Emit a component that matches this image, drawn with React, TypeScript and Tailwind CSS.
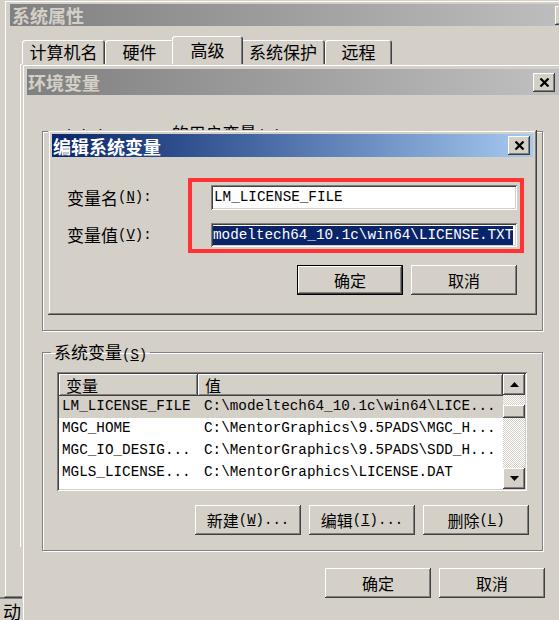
import React from "react";

const face = "bg-[#d4d0c8]";
const cjk = "font-['Noto_Sans_CJK_SC',sans-serif]";
const mono = "font-['Liberation_Mono','Noto_Sans_CJK_SC',monospace]";
const raised =
  "shadow-[inset_-1px_-1px_#404040,inset_1px_1px_#ffffff,inset_-2px_-2px_#808080,inset_2px_2px_#d4d0c8]";
const frame =
  "shadow-[inset_-1px_-1px_#404040,inset_1px_1px_#d4d0c8,inset_-2px_-2px_#808080,inset_2px_2px_#ffffff]";
const sunken =
  "shadow-[inset_1px_1px_#808080,inset_-1px_-1px_#ffffff,inset_2px_2px_#404040,inset_-2px_-2px_#d4d0c8]";
const etched =
  "border border-[#808080] shadow-[1px_1px_#ffffff,inset_1px_1px_#ffffff]";

const rows: [string, string][] = [
  ["LM_LICENSE_FILE", "C:\\modeltech64_10.1c\\win64\\LICE..."],
  ["MGC_HOME", "C:\\MentorGraphics\\9.5PADS\\MGC_H..."],
  ["MGC_IO_DESIG...", "C:\\MentorGraphics\\9.5PADS\\SDD_H..."],
  ["MGLS_LICENSE...", "C:\\MentorGraphics\\LICENSE.DAT"],
];

function Mono({ children }: { children: React.ReactNode }) {
  return <span className={`${mono} text-[14px]`}>{children}</span>;
}

function CloseBox() {
  return (
    <div className={`flex h-[19px] w-[22px] shrink-0 items-center justify-center ${face} ${raised}`}>
      <svg width="11" height="9" viewBox="0 0 11 9">
        <path d="M1.5 0.5 L9.5 8.5 M9.5 0.5 L1.5 8.5" stroke="#000" strokeWidth="2.2" />
      </svg>
    </div>
  );
}

function Arrow({ up }: { up?: boolean }) {
  return (
    <div className={`flex h-[21px] w-[22px] items-center justify-center ${face} ${raised}`}>
      <svg width="9" height="5" viewBox="0 0 9 5">
        <path d={up ? "M4.5 0 L9 5 H0 Z" : "M0 0 H9 L4.5 5 Z"} fill="#000" />
      </svg>
    </div>
  );
}

function Btn({ children, def }: { children: React.ReactNode; def?: boolean }) {
  return (
    <div
      className={`flex h-[30px] w-[106px] items-center justify-center text-[16px] ${face} ${
        def ? "border border-black shadow-[inset_-1px_-1px_#404040,inset_1px_1px_#ffffff,inset_-2px_-2px_#808080]" : raised
      }`}
    >
      {children}
    </div>
  );
}

function Tab({ w, sel, children }: { w: string; sel?: boolean; children: React.ReactNode }) {
  return (
    <div
      className={`${w} ${
        sel ? "relative z-10 -mx-[2px] h-[28px]" : "h-[24px]"
      } flex items-center justify-center rounded-t-[3px] ${face} shadow-[inset_1px_1px_#ffffff,inset_-1px_0_#404040,inset_-2px_0_#808080]`}
    >
      {children}
    </div>
  );
}

function ListView() {
  return (
    <div className={`ml-[14px] mt-[10px] flex h-[119px] w-[470px] bg-white p-[2px] ${sunken}`}>
      <div className="flex w-[444px] flex-col overflow-hidden">
        <div className="flex h-[22px] shrink-0 text-[16px] leading-none">
          <div className={`flex w-[139px] items-center pl-[7px] ${face} ${raised}`}>变量</div>
          <div className={`flex flex-1 items-center pl-[7px] ${face} ${raised}`}>值</div>
        </div>
        {rows.map(([name, value], i) => (
          <div
            key={name}
            className={`flex h-[22px] shrink-0 items-center whitespace-pre ${mono} text-[14.3px] ${
              i === 0 ? "bg-[#d4d0c8]" : ""
            }`}
          >
            <div className="w-[139px] pl-[3px]">{name}</div>
            <div className="pl-[6px]">{value}</div>
          </div>
        ))}
      </div>
      <div className="flex w-[22px] flex-col">
        <Arrow up />
        <div className="flex-1 bg-[image:repeating-conic-gradient(#ffffff_0_25%,#d4d0c8_0_50%)] bg-[length:2px_2px] pt-[10px]">
          <div className={`h-[13px] ${face} ${raised}`} />
        </div>
        <Arrow />
      </div>
    </div>
  );
}

function EditDialog() {
  return (
    <div className={`absolute left-[26px] top-[66px] h-[185px] w-[489px] ${face} ${frame}`}>
      <div className="mx-[4px] mt-[4px] flex h-[23px] items-center justify-between bg-linear-to-r from-[#0a246a] to-[#a6caf0] pl-[1px] pr-[3px]">
        <span className="text-[18px] font-bold leading-none text-white">编辑系统变量</span>
        <CloseBox />
      </div>
      <div className="mt-[21px] flex pl-[4px]">
        <div className="flex w-[136px] flex-col gap-[13px] pl-[15px] pt-[7px] text-[17px]">
          <div className="flex h-[25px] items-center">
            变量名
            <Mono>
              (<u>N</u>):
            </Mono>
          </div>
          <div className="flex h-[24px] items-center">
            变量值
            <Mono>
              (<u>V</u>):
            </Mono>
          </div>
        </div>
        <div className="flex h-[75px] w-[336px] flex-col gap-[13px] border-[4px] border-[#ff3333] pl-[19px] pt-[3px]">
          <div className={`flex h-[25px] w-[306px] items-center bg-white pl-[3px] ${sunken}`}>
            <span className={`${mono} text-[14.3px]`}>LM_LICENSE_FILE</span>
          </div>
          <div className={`flex h-[24px] w-[306px] items-center overflow-hidden whitespace-pre bg-white pl-[2px] ${sunken}`}>
            <span className={`${mono} bg-[#0a246a] text-[14.3px] leading-[19px] text-white`}>
              modeltech64_10.1c\win64\LICENSE.TXT
            </span>
          </div>
        </div>
      </div>
      <div className="mt-[12px] flex gap-[8px] pl-[249px]">
        <Btn def>确定</Btn>
        <Btn>取消</Btn>
      </div>
    </div>
  );
}

export default function App() {
  return (
    <div className={`relative h-[620px] w-[559px] overflow-hidden text-black ${face} ${cjk}`}>
      <div className="absolute left-0 top-[597px] h-[30px] w-[40px] border-t-2 border-[#808080] pl-[3px] pt-[2px] text-[18px] leading-[20px]">
        动
      </div>

      <div className={`absolute left-[4px] top-0 h-[598px] w-[580px] ${face} ${frame}`}>
        <div className="ml-[6px] mr-[4px] mt-[4px] flex h-[22px] items-center justify-between bg-linear-to-r from-[#808080] to-[#c0c0c0] pl-[2px] pr-[3px]">
          <span className="text-[18px] font-bold leading-none text-[#d4d0c8]">系统属性</span>
          <CloseBox />
        </div>
        <div className="mt-[10px] flex h-[28px] items-end pl-[18px] text-[17px]">
          <Tab w="w-[83px]">计算机名</Tab>
          <Tab w="w-[69px]">硬件</Tab>
          <Tab w="w-[71px]" sel>
            高级
          </Tab>
          <Tab w="w-[84px]">系统保护</Tab>
          <Tab w="w-[67px]">远程</Tab>
        </div>
        <div className="ml-[16px] h-[483px] w-[540px] border-l border-t border-white" />
      </div>

      <div className={`absolute left-[22px] top-[64px] h-[600px] w-[542px] ${face} ${frame}`}>
        <div className="mx-[5px] mt-[5px] flex h-[26px] items-center justify-between bg-linear-to-r from-[#808080] to-[#c0c0c0] pl-[1px] pr-[4px]">
          <span className="text-[18px] font-bold leading-none text-[#d4d0c8]">环境变量</span>
          <CloseBox />
        </div>
        <div className="pl-[20px]">
          <fieldset className={`mt-[26px] h-[210px] w-[501px] ${etched}`}>
            <legend className="ml-[8px] h-[20px] px-[3px] pt-[2px] text-[17px] leading-[20px]">
              <Mono>Administrator </Mono>的用户变量<Mono>(<u>U</u>)</Mono>
            </legend>
          </fieldset>
          <fieldset className={`mt-[11px] h-[209px] w-[501px] ${etched}`}>
            <legend className="ml-[8px] h-[20px] px-[3px] text-[17px] leading-[20px]">
              系统变量
              <Mono>
                (<u>S</u>)
              </Mono>
            </legend>
            <ListView />
            <div className="mt-[14px] flex gap-[8px] pl-[152px]">
              <Btn>
                新建
                <Mono>
                  (<u>W</u>)...
                </Mono>
              </Btn>
              <Btn>
                编辑
                <Mono>
                  (<u>I</u>)...
                </Mono>
              </Btn>
              <Btn>
                删除
                <Mono>
                  (<u>L</u>)
                </Mono>
              </Btn>
            </div>
          </fieldset>
          <div className="mt-[17px] flex gap-[8px] pl-[283px]">
            <Btn>确定</Btn>
            <Btn>取消</Btn>
          </div>
        </div>
        <EditDialog />
      </div>
    </div>
  );
}
